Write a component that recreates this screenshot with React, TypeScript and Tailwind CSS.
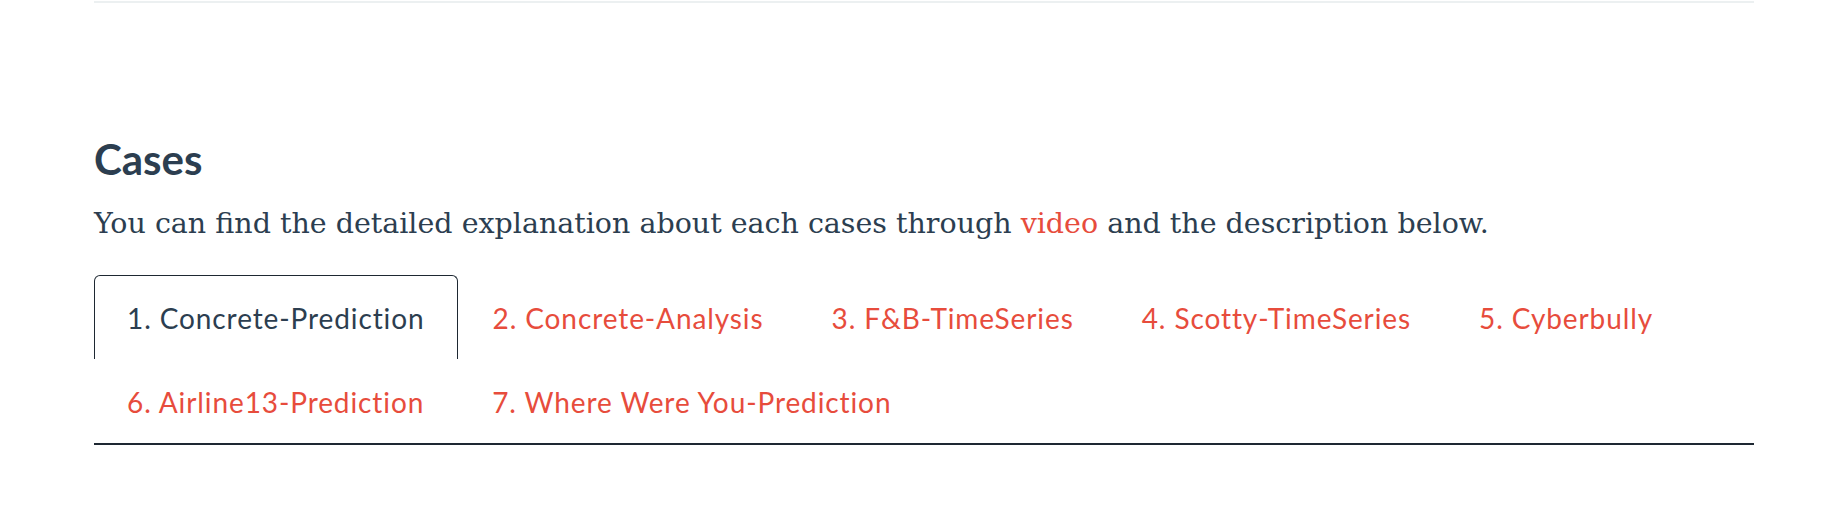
const tabs = [
  '1. Concrete-Prediction',
  '2. Concrete-Analysis',
  '3. F&B-TimeSeries',
  '4. Scotty-TimeSeries',
  '5. Cyberbully',
  '6. Airline13-Prediction',
  '7. Where Were You-Prediction',
]

export default function App() {
  const active = 0

  return (
    <div className="min-h-[510px] bg-white pl-[94px]">
      <div className="w-[1660px]">
        <div className="mt-[1px] h-[2px] bg-[#ecf0f1]" />

        {/* Cases header */}
        <h2 className="mt-[133px] text-[42px] leading-[46px] font-bold text-[#2c3e50] [font-family:Lato,sans-serif]">
          Cases
        </h2>
        <p className="mt-[22px] text-[28.5px] leading-[40px] text-[#2c3e50] [font-family:'DejaVu_Serif',serif]">
          You can find the detailed explanation about each cases through{' '}
          <a href="#" className="text-[#e74c3c]">video</a> and the description below.
        </p>

        {/* Tabs */}
        <ul className="mt-[31px] flex flex-wrap border-b-2 border-[#1e2832] [font-family:Lato,sans-serif]">
          {tabs.map((t, i) => (
            <li key={t} className="mr-[2px]">
              <a
                href="#"
                className={
                  i === active
                    ? 'block rounded-t-md border border-b-0 border-[#1e2832] px-[32px] pt-[24px] pb-[23px] text-[28px] leading-[36px] tracking-[0.9px] text-[#2c3e50]'
                    : 'block rounded-t-md border border-b-0 border-transparent px-[32px] pt-[24px] pb-[23px] text-[28px] leading-[36px] tracking-[0.9px] text-[#e74c3c]'
                }
              >
                {t}
              </a>
            </li>
          ))}
        </ul>
      </div>
    </div>
  )
}
